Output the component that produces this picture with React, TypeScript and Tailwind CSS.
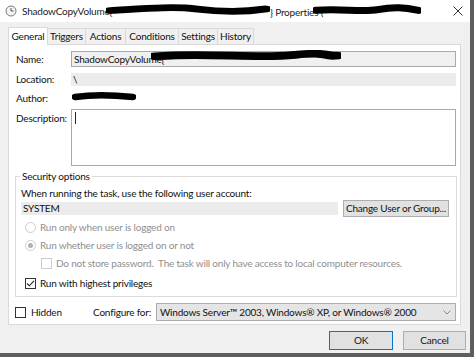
import React from "react";

const font = { fontFamily: 'Lato, "Liberation Sans", sans-serif' };

// black marker strokes used to hide private parts of the picture
const Scribble = ({ className, d, w }: { className: string; d: string; w: number }) => (
  <svg className={`absolute ${className}`} viewBox="0 0 100 20" preserveAspectRatio="none">
    <path d={d} stroke="#000" strokeWidth={w} strokeLinecap="round" fill="none" />
  </svg>
);

const ClockIcon = () => (
  <svg width="12" height="12" viewBox="0 0 12 12">
    <circle cx="6" cy="6" r="5" fill="#f4f4f4" stroke="#7a7a7a" strokeWidth="1" />
    <path d="M6 3v3h2.5" stroke="#555" strokeWidth="1" fill="none" />
  </svg>
);

const Radio = ({ checked }: { checked?: boolean }) => (
  <span className="w-[11px] h-[11px] rounded-full border border-[#cdcdcd] bg-white flex items-center justify-center">
    {checked && <span className="w-[5px] h-[5px] rounded-full bg-[#b0b0b0]" />}
  </span>
);

const Check = ({ checked, disabled }: { checked?: boolean; disabled?: boolean }) => (
  <span
    className={`w-[11px] h-[11px] border bg-white flex items-center justify-center ${
      disabled ? "border-[#cccccc]" : "border-[#333333]"
    }`}
  >
    {checked && (
      <svg width="9" height="9" viewBox="0 0 9 9">
        <path d="M1 4.5l2.3 2.3L8 1.8" stroke="#222" strokeWidth="1.1" fill="none" />
      </svg>
    )}
  </span>
);

const tabs = [
  { name: "General", w: "w-[40px]" },
  { name: "Triggers", w: "w-[38px]" },
  { name: "Actions", w: "w-[40px]" },
  { name: "Conditions", w: "w-[53px]" },
  { name: "Settings", w: "w-[39px]" },
  { name: "History", w: "w-[36px]" },
];

export default function App() {
  return (
    <div
      className="w-[474px] h-[357px] bg-[#5e5e5e] overflow-hidden text-[10px] tracking-[-0.2px] text-[#111] whitespace-nowrap"
      style={font}
    >
      <div className="w-[470px] h-[353px] bg-[#f0f0f0] flex flex-col">
        {/* title bar */}
        <div className="relative h-[22px] bg-white flex items-center pl-[5px] pr-[7px] shrink-0">
          <ClockIcon />
          <span className="ml-[5px] text-[#222]">ShadowCopyVolume{"{"}</span>
          <span className="absolute left-[270px] top-[5px] text-[#222]">{"}"} Properties (</span>
          <svg className="ml-auto" width="10" height="10" viewBox="0 0 10 10">
            <path d="M0.5 0.5l9 9M9.5 0.5l-9 9" stroke="#333" strokeWidth="1" />
          </svg>
          <Scribble className="left-[106px] top-[3px] w-[164px] h-[15px]" d="M3 10 C20 8 40 4 55 8 S85 12 97 8" w={9} />
          <Scribble className="left-[313px] top-[4px] w-[108px] h-[14px]" d="M3 9 C25 6 45 12 60 8 S85 5 97 9" w={10} />
        </div>

        <div className="flex flex-col px-[8px] pt-[5px]">
          {/* tabs */}
          <div className="flex items-end h-[17px]">
            {tabs.map((t, i) =>
              i === 0 ? (
                <div
                  key={t.name}
                  className={`${t.w} h-[18px] bg-white border border-b-0 border-[#d9d9d9] flex items-center justify-center -mb-px z-10`}
                >
                  {t.name}
                </div>
              ) : (
                <div
                  key={t.name}
                  className={`${t.w} h-[16px] bg-[#f0f0f0] border border-l-0 border-b-0 border-[#d9d9d9] flex items-center justify-center`}
                >
                  {t.name}
                </div>
              )
            )}
          </div>

          {/* general panel */}
          <div className="relative w-[453px] h-[281px] bg-white border border-[#d9d9d9] flex flex-col pl-[7px] pr-[4px] pt-[6px]">
            <div className="flex items-center h-[16px]">
              <span className="w-[55px]">Name:</span>
              <div className="flex-1 h-[16px] bg-[#f0f0f0] border border-[#a9a9a9] flex items-center pl-[2px]">
                ShadowCopyVolume{"{"}
              </div>
            </div>
            <div className="flex items-center h-[13px] mt-[6px]">
              <span className="w-[55px]">Location:</span>
              <div className="flex-1 h-[13px] bg-[#ececec] flex items-center pl-[2px]">\</div>
            </div>
            <div className="flex items-center h-[13px] mt-[6px]">
              <span className="w-[55px]">Author:</span>
            </div>
            <div className="flex items-start mt-[4px]">
              <span className="w-[55px] pt-[2px]">Description:</span>
              <div className="flex-1 h-[57px] border border-[#7fb4e4] pl-[3px] pt-[2px]">
                <span className="block w-px h-[12px] bg-[#222]" />
              </div>
            </div>

            {/* security options */}
            <div className="relative mt-[10px] w-[442px] h-[121px] border border-[#dcdcdc] -ml-px flex flex-col pl-[5px] pt-[9px]">
              <span className="absolute left-[4px] -top-[8px] bg-white px-[2px]">Security options</span>
              <div className="h-[14px] flex items-center">When running the task, use the following user account:</div>
              <div className="flex items-center pr-[7px]">
                <div className="w-[317px] h-[13px] bg-[#ececec] flex items-center pl-[2px]">SYSTEM</div>
                <div className="ml-auto w-[106px] h-[17px] bg-[#e1e1e1] border border-[#adadad] flex items-center justify-center">
                  Change User or Group...
                </div>
              </div>
              <div className="flex items-center gap-[4px] mt-[3px] pl-[4px] text-[#8f8f8f] h-[14px]">
                <Radio />
                Run only when user is logged on
              </div>
              <div className="flex items-center gap-[4px] mt-[4px] pl-[4px] text-[#8f8f8f] h-[14px]">
                <Radio checked />
                Run whether user is logged on or not
              </div>
              <div className="flex items-center gap-[4px] mt-[4px] pl-[20px] text-[#8f8f8f] h-[14px]">
                <Check disabled />
                Do not store password.&nbsp; The task will only have access to local computer resources.
              </div>
              <div className="flex items-center gap-[4px] mt-[6px] pl-[4px] h-[14px]">
                <Check checked />
                Run with highest privileges
              </div>
            </div>

            {/* hidden / configure for */}
            <div className="flex items-center mt-[6px] h-[18px]">
              <div className="flex items-center gap-[5px] w-[78px] -ml-px">
                <Check />
                Hidden
              </div>
              <span className="w-[63px]">Configure for:</span>
              <div className="flex-1 h-[18px] bg-[#e5e5e5] border border-[#adadad] flex items-center pl-[3px] pr-[4px]">
                Windows Server™ 2003, Windows® XP, or Windows® 2000
                <svg className="ml-auto" width="8" height="5" viewBox="0 0 8 5">
                  <path d="M0.5 0.5L4 4l3.5-3.5" stroke="#888" strokeWidth="1" fill="none" />
                </svg>
              </div>
            </div>

            <Scribble className="left-[142px] top-[5px] w-[190px] h-[14px]" d="M3 9 C30 4 55 12 75 7 S92 10 97 8" w={11} />
            <Scribble className="left-[63px] top-[46px] w-[64px] h-[12px]" d="M5 10 C30 6 60 6 95 10" w={11} />
          </div>

          {/* buttons */}
          <div className="flex justify-end gap-[10px] mt-[6px]">
            <div className="w-[64px] h-[19px] bg-[#e1e1e1] border border-[#0078d7] flex items-center justify-center">OK</div>
            <div className="w-[63px] h-[19px] bg-[#e1e1e1] border border-[#adadad] flex items-center justify-center -mr-[4px]">
              Cancel
            </div>
          </div>
        </div>
      </div>
    </div>
  );
}
